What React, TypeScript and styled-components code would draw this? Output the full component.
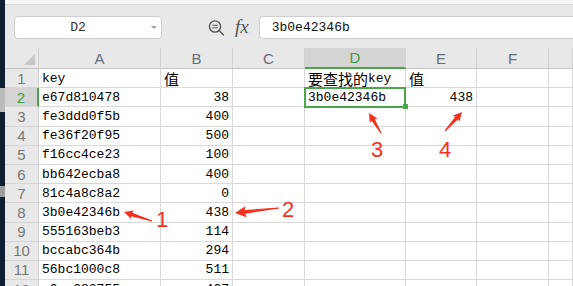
import React from 'react';
import styled, { createGlobalStyle, css } from 'styled-components';

const GlobalStyle = createGlobalStyle`
    html, body { margin: 0; padding: 0; }
    body { width: 573px; height: 286px; overflow: hidden; background: #fff; }
`

const Page = styled.div`
    position: relative;
    display: flex;
    width: 573px;
    height: 286px;
    overflow: hidden;
`
const LeftStrip = styled.div`
    width: 5px;
    flex-shrink: 0;
    background: linear-gradient(to bottom, #0e1f31 0 88px, #bcbcbc 88px 112px, #0e1f31 112px 186px, #9c9c9c 186px 197px, #0e1f31 197px);
`
const Excel = styled.div`
    flex: 1;
    display: flex;
    flex-direction: column;
    background: #e8e8e8;
    min-width: 0;
`
const TopBand = styled.div`
    height: 4px;
    background: #f4f4f4;
    border-bottom: 1px solid #dadada;
`
const Toolbar = styled.div`
    height: 43px;
    box-sizing: border-box;
    display: flex;
    align-items: flex-start;
    padding: 11px 0 0 9px;
`
const NameBox = styled.div`
    width: 148px;
    height: 23px;
    box-sizing: border-box;
    border: 1px solid #cfcfcf;
    border-radius: 4px;
    background: #fff;
    display: flex;
    align-items: center;
    font: 13px "Liberation Mono", monospace;
    color: #333;
`
const NameText = styled.div`
    flex: 1;
    text-align: center;
    padding-right: 10px;
`
const Caret = styled.div`
    width: 0;
    height: 0;
    border-left: 3px solid transparent;
    border-right: 3px solid transparent;
    border-top: 3px solid #a0a0a0;
    margin-right: 4px;
`
const ZoomIcon = styled.svg`
    margin: 3px 0 0 45px;
    flex-shrink: 0;
`
const Fx = styled.div`
    margin-left: 10px;
    height: 23px;
    line-height: 23px;
    font: italic 19px "Liberation Serif", serif;
    color: #555;
`
const Formula = styled.div`
    flex: 1;
    margin-left: 10px;
    height: 23px;
    box-sizing: border-box;
    border: 1px solid #cfcfcf;
    border-right: none;
    border-radius: 4px 0 0 4px;
    background: #fff;
    padding-left: 12px;
    font: 13px/21px "Liberation Mono", monospace;
    color: #111;
`
const Sheet = styled.div`
    flex: 1;
    display: grid;
    grid-template-columns: 34px 122px 72px 72px 101px 71px 72px 1fr;
    grid-template-rows: 21px;
    grid-auto-rows: 19.2px;
    background: #fff;
    overflow: hidden;
`
const Corner = styled.div`
    position: relative;
    background: #e8e8e8;
    border-right: 1px solid #cfcfcf;
    border-bottom: 1px solid #c4c4c4;
    &::after {
        content: '';
        position: absolute;
        right: 3px;
        bottom: 3px;
        border-left: 11px solid transparent;
        border-bottom: 11px solid #c6c6c6;
    }
`
const ColHead = styled.div<{ $active?: boolean }>`
    display: flex;
    align-items: center;
    justify-content: center;
    font: 15px "Liberation Sans", sans-serif;
    border-right: 1px solid #d2d2d2;
    ${({ $active }) => $active ? css`
        background: #d4d4d4;
        border-bottom: 2px solid #4ca64c;
        color: #3f9e3f;
    ` : css`
        background: #e8e8e8;
        border-bottom: 1px solid #c4c4c4;
        color: #6a6e78;
    `}
`
const RowHead = styled.div<{ $active?: boolean }>`
    display: flex;
    align-items: center;
    justify-content: center;
    font: 15px "Liberation Sans", sans-serif;
    border-bottom: 1px solid #d6d6d6;
    ${({ $active }) => $active ? css`
        background: #d4d4d4;
        border-right: 2px solid #4ca64c;
        color: #3f9e3f;
    ` : css`
        background: #e8e8e8;
        border-right: 1px solid #cfcfcf;
        color: #777;
    `}
`
const Cell = styled.div<{ $right?: boolean; $selected?: boolean }>`
    position: relative;
    display: flex;
    align-items: center;
    justify-content: ${({ $right }) => $right ? 'flex-end' : 'flex-start'};
    padding: 0 3px;
    border-right: 1px solid #d9d9d9;
    border-bottom: 1px solid #d9d9d9;
    font: 13px "Liberation Mono", monospace;
    color: #000;
    white-space: nowrap;
    ${({ $selected }) => $selected && css`
        &::after {
            content: '';
            position: absolute;
            inset: -1px -1px -2px -1px;
            border: 2px solid #4ca64c;
            z-index: 1;
        }
        &::before {
            content: '';
            position: absolute;
            right: -3px;
            bottom: -3px;
            width: 5px;
            height: 5px;
            background: #4ca64c;
            z-index: 2;
        }
    `}
`
const Cjk = styled.span`
    font: 15px "Noto Sans CJK SC", sans-serif;
`
const Overlay = styled.svg`
    position: absolute;
    left: 0;
    top: 0;
    pointer-events: none;
`
const Num = styled.span<{ $x: number; $y: number }>`
    position: absolute;
    left: ${({ $x }) => $x}px;
    top: ${({ $y }) => $y}px;
    font: 22px/22px "Liberation Sans", sans-serif;
    color: #f5301f;
`

type Row = [React.ReactNode, string, string, React.ReactNode, string];

const rows: Row[] = [
    ['key', '值', '', <><Cjk>要查找的</Cjk>key</>, '值'],
    ['e67d810478', '38', '', '3b0e42346b', '438'],
    ['fe3ddd0f5b', '400', '', '', ''],
    ['fe36f20f95', '500', '', '', ''],
    ['f16cc4ce23', '100', '', '', ''],
    ['bb642ecba8', '400', '', '', ''],
    ['81c4a8c8a2', '0', '', '', ''],
    ['3b0e42346b', '438', '', '', ''],
    ['555163beb3', '114', '', '', ''],
    ['bccabc364b', '294', '', '', ''],
    ['56bc1000c8', '511', '', '', ''],
    ['c0ee083755', '427', '', '', ''],
];

const cols = ['A', 'B', 'C', 'D', 'E', 'F', ''];

const arrowPoints = (tx: number, ty: number, hx: number, hy: number, head: number, hw: number) => {
    const dx = hx - tx, dy = hy - ty;
    const L = Math.hypot(dx, dy);
    const ux = dx / L, uy = dy / L, nx = -uy, ny = ux;
    const pts = [[0, 0.6], [L - head + 1, 1.8], [L - head, hw], [L, 0], [L - head, -hw], [L - head + 1, -1.8], [0, -0.6]];
    return pts.map(([s, w]) => `${(tx + ux * s + nx * w).toFixed(1)},${(ty + uy * s + ny * w).toFixed(1)}`).join(' ');
}

const arrows = [
    arrowPoints(152, 221, 124, 212, 9, 4.5),
    arrowPoints(279, 208, 235, 213, 11, 5.5),
    arrowPoints(381, 133, 369, 113, 9, 4.5),
    arrowPoints(445, 131, 462, 112, 9, 4.5),
];

const cellValue = (v: React.ReactNode) => typeof v === 'string' && v === '值' ? <Cjk>{v}</Cjk> : v;

export default function App() {
    return (
        <>
            <GlobalStyle />
            <Page>
                <LeftStrip />
                <Excel>
                    <TopBand />
                    <Toolbar>
                        <NameBox>
                            <NameText>D2</NameText>
                            <Caret />
                        </NameBox>
                        <ZoomIcon width="18" height="18" viewBox="0 0 18 18" fill="none" stroke="#555" strokeWidth="1.4">
                            <circle cx="8" cy="7.5" r="5.6" />
                            <path d="M12.1 11.6 L16.5 16" strokeLinecap="round" />
                            <path d="M5.3 6.3 H10.7 M5.3 8.7 H10.7" strokeWidth="1.1" />
                        </ZoomIcon>
                        <Fx>fx</Fx>
                        <Formula>3b0e42346b</Formula>
                    </Toolbar>
                    <Sheet>
                        <Corner />
                        {cols.map((c, i) => <ColHead key={i} $active={c === 'D'}>{c}</ColHead>)}
                        {rows.map((r, i) => (
                            <React.Fragment key={i}>
                                <RowHead $active={i === 1}>{i + 1}</RowHead>
                                <Cell>{r[0]}</Cell>
                                <Cell $right={i > 0}>{cellValue(r[1])}</Cell>
                                <Cell>{r[2]}</Cell>
                                <Cell $selected={i === 1}>{r[3]}</Cell>
                                <Cell $right={i > 0}>{cellValue(r[4])}</Cell>
                                <Cell />
                                <Cell />
                            </React.Fragment>
                        ))}
                    </Sheet>
                </Excel>
                <Overlay width="573" height="286" viewBox="0 0 573 286">
                    {arrows.map((p, i) => <polygon key={i} points={p} fill="#f5301f" />)}
                </Overlay>
                <Num $x={156} $y={209}>1</Num>
                <Num $x={282} $y={199}>2</Num>
                <Num $x={371} $y={139}>3</Num>
                <Num $x={439} $y={139}>4</Num>
            </Page>
        </>
    )
}
